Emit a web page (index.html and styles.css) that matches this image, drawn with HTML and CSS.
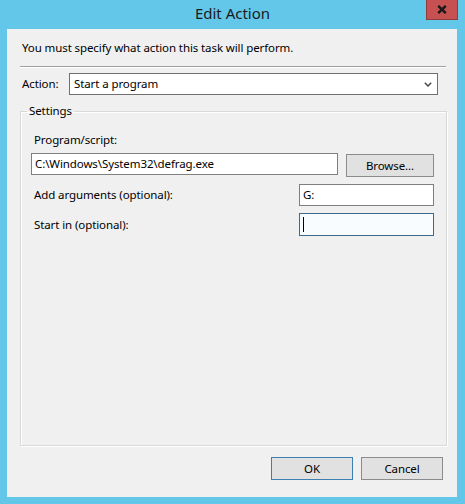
FILE: index.html
```html
<!DOCTYPE html>
<html>
<head>
<meta charset="utf-8">
<link rel="stylesheet" href="styles.css">
</head>
<body>
<div class="window">
  <div class="titlebar">
    <div class="title">Edit Action</div>
    <div class="close">
      <svg width="10" height="9" viewBox="0 0 10 9"><path d="M1.2 0.8 L8.8 8.2 M8.8 0.8 L1.2 8.2" stroke="#1a1a1a" stroke-width="2.4" fill="none"/></svg>
    </div>
  </div>
  <div class="client">
    <div class="intro">You must specify what action this task will perform.</div>
    <div class="separator"></div>
    <div class="action-row">
      <span class="action-label">Action:</span>
      <div class="select">
        <span>Start a program</span>
        <svg class="chevron" width="8" height="5" viewBox="0 0 8 5"><path d="M0.8 0.8 L4 4 L7.2 0.8" stroke="#4a4a4a" stroke-width="1.5" fill="none"/></svg>
      </div>
    </div>
    <fieldset class="group">
      <legend class="legend">Settings</legend>
      <div class="group-body">
        <div class="label first">Program/script:</div>
        <div class="program-row">
          <div class="field program">C:\Windows\System32\defrag.exe</div>
          <div class="button browse">Browse...</div>
        </div>
        <div class="field-row args-row">
          <span class="label">Add arguments (optional):</span>
          <div class="field small">G:</div>
        </div>
        <div class="field-row start-row">
          <span class="label">Start in (optional):</span>
          <div class="field small focused"><span class="caret"></span></div>
        </div>
      </div>
    </fieldset>
    <div class="buttons">
      <div class="button default">OK</div>
      <div class="button">Cancel</div>
    </div>
  </div>
</div>
</body>
</html>
```
FILE: styles.css
```css
html, body {
  margin: 0;
  padding: 0;
}
body {
  font-family: "Noto Sans", "Open Sans", sans-serif;
  font-size: 11.5px;
  letter-spacing: -0.1px;
  line-height: 16px;
  color: #000;
}
.window {
  width: 465px;
  height: 504px;
  background: #63c7ea;
  box-sizing: border-box;
  padding: 0 8px 7px 7px;
  display: flex;
  flex-direction: column;
}
.titlebar {
  height: 29px;
  flex: none;
  display: grid;
  grid-template-columns: 1fr auto 1fr;
  margin: 0 -8px 0 -7px;
}
.title {
  grid-column: 2;
  font-size: 15px;
  letter-spacing: 0;
  line-height: 20px;
  padding-top: 3px;
  color: #1b1b1b;
}
.close {
  grid-column: 3;
  justify-self: end;
  margin-right: 7px;
  width: 32px;
  height: 20px;
  box-sizing: border-box;
  background: #c75050;
  border: 1px solid #8f3c3c;
  border-top: none;
  display: flex;
  align-items: center;
  justify-content: center;
}
.client {
  flex: 1;
  background: #f0f0f0;
  display: flex;
  flex-direction: column;
}
.intro {
  margin: 11px 0 0 15px;
}
.separator {
  margin: 10px 0 0 13px;
  width: 426px;
  border-top: 1px solid #a0a0a0;
  border-bottom: 1px solid #ffffff;
}
.action-row {
  margin-top: 5px;
  display: flex;
  align-items: center;
  height: 22px;
}
.action-label {
  margin-left: 15px;
  width: 47px;
}
.select {
  width: 369px;
  height: 22px;
  box-sizing: border-box;
  border: 1px solid #6f6f6f;
  background: #fff;
  display: flex;
  align-items: center;
  justify-content: space-between;
  padding: 0 5px 0 4px;
}
.chevron {
  display: block;
}
.group {
  flex: 1;
  margin: 8px 10px 0 13px;
  padding: 0;
  min-width: 0;
  border: 1px solid #d9d9d9;
  box-shadow: inset 1px 1px 0 #fff, 1px 1px 0 #fff;
}
.legend {
  margin-left: 6px;
  padding: 0 2px;
  line-height: 16px;
}
.group-body {
  padding: 13px 12px 0 10px;
  display: flex;
  flex-direction: column;
}
.label {
  margin-left: 3px;
}
.program-row {
  margin-top: 5px;
  display: flex;
  align-items: flex-start;
  gap: 8px;
}
.field {
  height: 22px;
  box-sizing: border-box;
  border: 1px solid #7f7f7f;
  background: #fff;
  padding: 0 3px;
  display: flex;
  align-items: center;
}
.program {
  flex: 1;
}
.button {
  width: 82px;
  height: 23px;
  box-sizing: border-box;
  border: 1px solid #8c8c8c;
  background: #e1e1e1;
  display: flex;
  align-items: center;
  justify-content: center;
}
.browse {
  width: 88px;
  margin-top: 1px;
}
.field-row {
  margin-top: 7px;
  display: flex;
  align-items: center;
}
.small {
  margin-left: auto;
  width: 135px;
}
.focused {
  height: 23px;
  border-color: #3a6a8c;
  background: #f8fcff;
}
.caret {
  width: 1px;
  height: 15px;
  background: #000;
}
.buttons {
  margin: 11px 14px 17px 0;
  display: flex;
  justify-content: flex-end;
  gap: 8px;
}
.default {
  border-color: #3c7fb1;
}
```
